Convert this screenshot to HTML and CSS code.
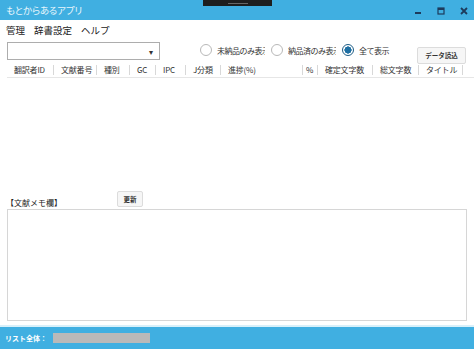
FILE: index.html
```html
<!DOCTYPE html>
<html lang="ja">
  <head>
    <meta charset="UTF-8" />
    <title>もとからあるアプリ</title>
    <link rel="stylesheet" href="styles.css">
  </head>
  <body>
    <div class="window">
      <div class="titlebar">
        <span class="title">もとからあるアプリ</span>
        <div class="notch"><span></span></div>
        <div class="controls">
          <svg width="8" height="8" viewBox="0 0 8 8"><rect x="1" y="5" width="6" height="2" fill="#1d3b5c"/></svg>
          <svg width="8" height="8" viewBox="0 0 8 8"><rect x="1" y="1" width="6" height="6" fill="none" stroke="#1d3b5c" stroke-width="1.2"/><rect x="1" y="1" width="6" height="2" fill="#1d3b5c"/></svg>
          <svg width="8" height="8" viewBox="0 0 8 8"><path d="M1 1 L7 7 M7 1 L1 7" stroke="#1d3b5c" stroke-width="1.8"/></svg>
        </div>
      </div>

      <div class="menubar">
        <span>管理</span>
        <span>辞書設定</span>
        <span>ヘルプ</span>
      </div>

      <div class="toolbar">
        <div class="combo"><span class="arrow">▾</span></div>
        <div class="radios">
          <label class="radio"><span class="dot"></span><span class="rlabel clip">未納品のみ表示</span></label>
          <label class="radio"><span class="dot"></span><span class="rlabel clip">納品済のみ表示</span></label>
          <label class="radio"><span class="dot on"></span><span class="rlabel">全て表示</span></label>
        </div>
        <button class="btn load">データ読込</button>
      </div>

      <div class="grid">
        <div class="head">
          <span style="width:47px">翻訳者ID</span>
          <span style="width:43px">文献番号</span>
          <span style="width:33px">種別</span>
          <span style="width:26px">GC</span>
          <span style="width:30px">IPC</span>
          <span style="width:35px">J分類</span>
          <span style="width:82px">進捗(%)</span>
          <span style="width:15px" class="tight">%</span>
          <span style="width:55px">確定文字数</span>
          <span style="width:46px">総文字数</span>
          <span style="width:44px">タイトル</span>
        </div>
      </div>

      <div class="memo-row">
        <span class="memo-label">【文献メモ欄】</span>
        <button class="btn update">更新</button>
      </div>
      <div class="memo"></div>

      <div class="statusbar">
        <span class="status-label">リスト全体：</span>
        <div class="progress"></div>
      </div>
    </div>
  </body>
</html>
```

FILE: styles.css
```css
body {
  margin: 0;
  padding: 0;
  font-family: "Noto Sans CJK JP", "Noto Sans", sans-serif;
  background-color: #ffffff;
  color: #222;
}
.window {
  width: 474px;
  height: 349px;
  display: flex;
  flex-direction: column;
  overflow: hidden;
}
.titlebar {
  height: 20px;
  background-color: #40afe1;
  display: flex;
  align-items: center;
  position: relative;
  padding-left: 6px;
}
.title {
  color: #e8f6fc;
  font-size: 9.5px;
  letter-spacing: -1px;
}
.notch {
  position: absolute;
  left: 203px;
  top: 0;
  width: 69px;
  height: 6px;
  background-color: #1e1e1e;
  display: flex;
  justify-content: center;
  align-items: center;
}
.notch span {
  width: 20px;
  height: 1px;
  background-color: #666;
}
.controls {
  margin-left: auto;
  display: flex;
  gap: 15px;
  padding-right: 6px;
  padding-top: 2px;
}
.menubar {
  height: 19px;
  display: flex;
  align-items: center;
  gap: 9px;
  padding-left: 6px;
  font-size: 9.5px;
  color: #222;
}
.toolbar {
  display: flex;
  align-items: center;
  height: 24px;
  padding: 0 8px 0 7px;
}
.combo {
  width: 151px;
  height: 16px;
  border: 1px solid #adadad;
  display: flex;
  align-items: center;
  justify-content: flex-end;
}
.arrow {
  font-size: 8px;
  color: #333;
  padding-right: 6px;
}
.radios {
  display: flex;
  margin-left: 40px;
  margin-top: -2px;
}
.radio {
  display: flex;
  align-items: center;
  font-size: 8px;
  letter-spacing: -0.5px;
  color: #333;
}
.dot {
  width: 12px;
  height: 12px;
  border: 1px solid #b8b8b8;
  border-radius: 50%;
  box-sizing: border-box;
  margin-right: 5px;
  background: #fff;
}
.dot.on {
  border: 1px solid #1e5d86;
  background: radial-gradient(circle, #1e6fa3 0 3.4px, #fff 3.8px);
}
.rlabel.clip {
  width: 48px;
  overflow: hidden;
  white-space: nowrap;
  margin-right: 6px;
}
.btn {
  font-family: inherit;
  font-size: 6.5px;
  font-weight: bold;
  color: #333;
  background-color: #f6f6f6;
  border: 1px solid #dcdcdc;
  border-radius: 2px;
  padding: 0;
}
.load {
  margin-left: auto;
  width: 49px;
  height: 17px;
  margin-top: 8px;
}
.grid {
  flex: 1;
  padding-left: 7px;
}
.head {
  display: flex;
  height: 14px;
  border-bottom: 1px solid #e6e6e6;
  font-size: 8px;
  letter-spacing: -0.2px;
  color: #333;
}
.head span {
  display: flex;
  align-items: center;
  padding-left: 7px;
  box-sizing: border-box;
  border-right: 1px solid #d8d8d8;
  white-space: nowrap;
  overflow: hidden;
  line-height: 10px;
  margin: 2px 0;
}
.head span.tight {
  padding-left: 3px;
}
.memo-row {
  display: flex;
  align-items: center;
  height: 19px;
  padding-left: 6px;
}
.memo-label {
  font-size: 8px;
  color: #222;
  margin-top: 5px;
}
.update {
  width: 26px;
  height: 16px;
  margin-left: 55px;
  margin-top: -2px;
}
.memo {
  height: 110px;
  margin: 0 7px 4px 7px;
  border: 1px solid #d6d6d6;
}
.statusbar {
  height: 22px;
  background-color: #40afe1;
  border-top: 2px solid #d8f0fa;
  display: flex;
  align-items: center;
  padding-left: 5px;
}
.status-label {
  color: #ffffff;
  font-size: 7px;
  font-weight: bold;
}
.progress {
  width: 97px;
  height: 10px;
  background-color: #b9b9b9;
  margin-left: 6px;
}
```
